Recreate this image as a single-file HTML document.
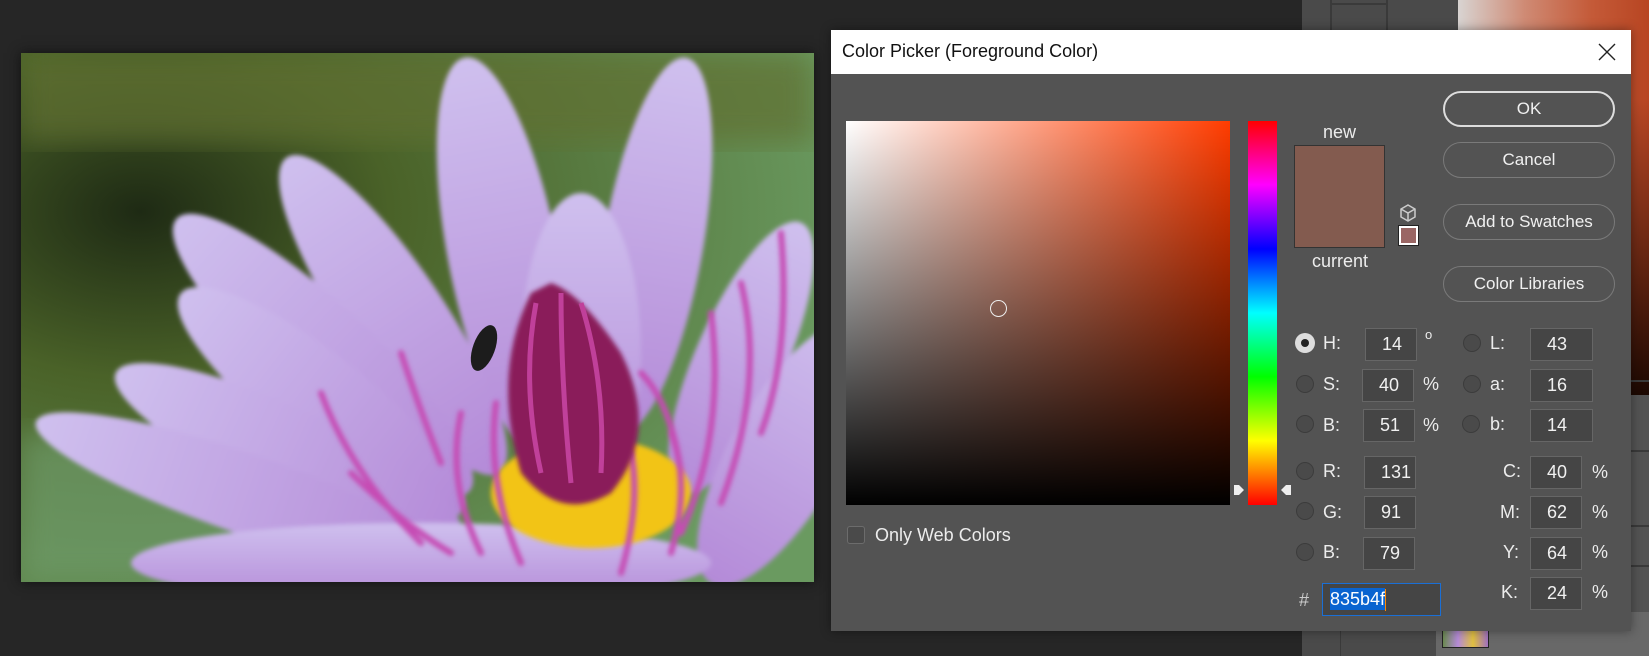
<!DOCTYPE html>
<html><head><style>
*{margin:0;padding:0;box-sizing:border-box}
body{width:1649px;height:656px;overflow:hidden;background:#262626;position:relative;font-family:"Liberation Sans",sans-serif;color:#e8e8e8}
.a{position:absolute}
.inp{position:absolute;background:#454545;border:1px solid #666;height:33px;font-size:18px;line-height:31px;padding-left:16px;color:#f0f0f0}
.lb{position:absolute;font-size:18px;line-height:20px;color:#ececec}
.rd{position:absolute;width:18px;height:18px;border-radius:50%;border:1px solid #3c3c3c;background:#4a4a4a}
.btn{position:absolute;left:1443px;width:172px;height:36px;border:1px solid #7a7a7a;border-radius:18px;text-align:center;font-size:17px;line-height:34px;color:#f0f0f0}
</style></head><body>
<!-- right background panels -->
<div class="a" style="left:1302px;top:0;width:156px;height:656px;background:#4a4a4a"></div>
<div class="a" style="left:1330px;top:0;width:58px;height:5px;border:2px solid #3a3a3a;border-top:0"></div>
<div class="a" style="left:1330px;top:5px;width:58px;height:30px;border:2px solid #3a3a3a;border-top:0;border-bottom:0"></div>
<div class="a" style="left:1458px;top:0;width:191px;height:395px;background:linear-gradient(180deg,rgba(0,0,0,0) 0%,rgba(0,0,0,0) 25%,rgba(20,5,0,.95) 100%),linear-gradient(90deg,#d8d4d2 0%,#cf8a74 35%,#c45a38 70%,#b84522 100%)"></div>
<div class="a" style="left:1458px;top:395px;width:191px;height:261px;background:#535353"></div>
<div class="a" style="left:1410px;top:380px;width:239px;height:2px;background:#3a3a3a"></div>
<div class="a" style="left:1410px;top:450px;width:239px;height:2px;background:#3a3a3a"></div>
<div class="a" style="left:1410px;top:525px;width:239px;height:2px;background:#3a3a3a"></div>
<div class="a" style="left:1410px;top:565px;width:239px;height:2px;background:#3a3a3a"></div>
<div class="a" style="left:1436px;top:612px;width:213px;height:44px;background:#686868"></div>
<div class="a" style="left:1442px;top:628px;width:47px;height:20px;background:linear-gradient(90deg,#6a8a50,#b58ad8,#e0c040,#a070c0);border:1px solid #222"></div>
<div class="a" style="left:1340px;top:405px;width:1px;height:251px;background:#3a3a3a"></div>

<!-- photo -->
<svg class="a" style="left:21px;top:53px;box-shadow:0 0 12px #111" width="793" height="529" viewBox="0 0 793 529">
<defs>
<filter id="b"><feGaussianBlur stdDeviation="14"/></filter>
<filter id="b2"><feGaussianBlur stdDeviation="2.5"/></filter>
<radialGradient id="bg" cx="0.15" cy="0.3" r="0.9"><stop offset="0" stop-color="#1e2a14"/><stop offset="0.35" stop-color="#4a6228"/><stop offset="1" stop-color="#6a9a60"/></radialGradient>
<linearGradient id="pt" x1="0" y1="0" x2="0" y2="1"><stop offset="0" stop-color="#cfc0ee"/><stop offset="1" stop-color="#b48ad8"/></linearGradient>
</defs>
<rect width="793" height="529" fill="url(#bg)"/>
<rect x="0" y="0" width="793" height="90" fill="#607030" opacity=".7" filter="url(#b)"/>
<rect x="0" y="380" width="300" height="149" fill="#72a070" opacity=".6" filter="url(#b)"/>
<g filter="url(#b2)" fill="url(#pt)">
<ellipse cx="482" cy="202" rx="55" ry="201" transform="rotate(-11 482 202)"/>
<ellipse cx="632" cy="192" rx="50" ry="190" transform="rotate(10 632 192)"/>
<ellipse cx="372" cy="262" rx="50" ry="190" transform="rotate(-34 372 262)"/>
<ellipse cx="302" cy="302" rx="50" ry="200" transform="rotate(-47 302 302)"/>
<ellipse cx="300" cy="350" rx="48" ry="178" transform="rotate(-52 300 350)"/>
<ellipse cx="267" cy="400" rx="45" ry="190" transform="rotate(-65 267 400)"/>
<ellipse cx="222" cy="440" rx="40" ry="219" transform="rotate(-71 222 440)"/>
<ellipse cx="720" cy="305" rx="45" ry="148" transform="rotate(24 720 305)"/>
<ellipse cx="765" cy="400" rx="55" ry="150" transform="rotate(30 765 400)"/>
<ellipse cx="560" cy="300" rx="60" ry="160"/>
<ellipse cx="400" cy="510" rx="290" ry="40"/>
</g>
<ellipse cx="570" cy="440" rx="100" ry="55" fill="#f2c418" filter="url(#b2)"/>
<g stroke="#c64cb4" stroke-width="6" fill="none" stroke-linecap="round" filter="url(#b2)">
<path d="M440 360 Q425 430 460 500"/><path d="M475 350 Q465 430 500 510"/><path d="M330 420 Q380 470 430 500"/>
<path d="M300 340 Q330 420 400 490"/><path d="M690 260 Q705 380 660 480"/><path d="M720 230 Q745 330 700 450"/>
<path d="M650 380 Q670 430 650 500"/><path d="M610 400 Q620 450 600 520"/><path d="M760 180 Q770 300 740 380"/>
<path d="M380 300 Q400 360 420 410"/><path d="M620 320 Q650 350 660 420"/>
</g>
<path d="M510 240 Q470 320 500 420 Q540 470 590 440 Q640 380 600 300 Q560 240 530 230 Z" fill="#8a1a5a" filter="url(#b2)"/>
<g stroke="#c0409a" stroke-width="5" fill="none"><path d="M515 250 Q500 330 520 420"/><path d="M540 240 Q540 330 550 430"/><path d="M560 250 Q585 330 580 420"/></g>
<ellipse cx="463" cy="295" rx="11" ry="24" fill="#1c1c1c" transform="rotate(20 463 295)"/>
</svg>

<!-- dialog -->
<div class="a" style="left:831px;top:30px;width:800px;height:601px;background:#535353;box-shadow:0 0 10px rgba(0,0,0,.4)"></div>
<div class="a" style="left:831px;top:30px;width:800px;height:44px;background:#fff"></div>
<div class="a" style="left:842px;top:41px;font-size:18px;color:#111">Color Picker (Foreground Color)</div>
<svg class="a" style="left:1598px;top:43px" width="18" height="18"><path d="M1 1L17 17M17 1L1 17" stroke="#222" stroke-width="1.4"/></svg>

<div class="a" style="left:846px;top:121px;width:384px;height:384px;background:linear-gradient(180deg,rgba(0,0,0,0),#000),linear-gradient(90deg,#fff,#ff3c00)"></div>
<div class="a" style="left:990px;top:300px;width:17px;height:17px;border-radius:50%;border:1.5px solid #eee"></div>
<div class="a" style="left:1248px;top:121px;width:29px;height:384px;background:linear-gradient(180deg,#ff0000 0%,#ff00ff 16.6%,#0000ff 33.3%,#00ffff 50%,#00ff00 66.6%,#ffff00 83.3%,#ff3c00 96.1%,#ff0000 100%)"></div>
<svg class="a" style="left:1233px;top:483px" width="60" height="14"><path d="M1 2L1 12L6 12L11 7L6 2Z" fill="#eee"/><path d="M58 2L58 12L53 12L48 7L53 2Z" fill="#eee"/></svg>

<div class="a" style="left:847px;top:526px;width:18px;height:18px;border:1px solid #6c6c6c;border-radius:3px;background:#4a4a4a"></div>
<div class="lb" style="left:875px;top:525px">Only Web Colors</div>

<div class="lb" style="left:1323px;top:122px">new</div>
<div class="a" style="left:1294px;top:145px;width:91px;height:103px;background:#835b4f;border:1px solid #333"></div>
<div class="lb" style="left:1312px;top:251px">current</div>
<svg class="a" style="left:1398px;top:203px" width="20" height="20"><path d="M10 2L17 6L17 14L10 18L3 14L3 6Z M3 6L10 10L17 6 M10 10L10 18" fill="#5a5a5a" stroke="#ccc" stroke-width="1.5"/></svg>
<div class="a" style="left:1398px;top:225px;width:21px;height:21px;background:#fff;border:1px solid #222;padding:2px"><div style="width:15px;height:15px;background:#9a6664;margin:0"></div></div>

<div class="btn" style="top:91px;border:2px solid #ddd;line-height:32px">OK</div>
<div class="btn" style="top:142px">Cancel</div>
<div class="btn" style="top:204px">Add to Swatches</div>
<div class="btn" style="top:266px">Color Libraries</div>

<div class="a" style="left:1295px;top:333px;width:20px;height:20px;border-radius:50%;background:#ddd"><div style="width:8px;height:8px;border-radius:50%;background:#222;margin:6px"></div></div>
<div class="lb" style="left:1323px;top:333px">H:</div><div class="inp" style="left:1365px;top:328px;width:52px">14</div><div class="lb" style="left:1425px;top:325px;font-size:13px">o</div>
<div class="rd" style="left:1296px;top:375px"></div><div class="lb" style="left:1323px;top:374px">S:</div><div class="inp" style="left:1362px;top:369px;width:52px">40</div><div class="lb" style="left:1423px;top:374px">%</div>
<div class="rd" style="left:1296px;top:415px"></div><div class="lb" style="left:1323px;top:415px">B:</div><div class="inp" style="left:1363px;top:409px;width:52px">51</div><div class="lb" style="left:1423px;top:415px">%</div>
<div class="rd" style="left:1296px;top:462px"></div><div class="lb" style="left:1323px;top:461px">R:</div><div class="inp" style="left:1364px;top:456px;width:52px">131</div>
<div class="rd" style="left:1296px;top:502px"></div><div class="lb" style="left:1323px;top:502px">G:</div><div class="inp" style="left:1364px;top:496px;width:52px">91</div>
<div class="rd" style="left:1296px;top:543px"></div><div class="lb" style="left:1323px;top:542px">B:</div><div class="inp" style="left:1363px;top:537px;width:52px">79</div>
<div class="lb" style="left:1299px;top:590px;color:#ccc">#</div>
<div class="inp" style="left:1322px;top:583px;width:119px;border:1px solid #1a6fd6;padding-left:7px"><span style="background:#0a64d0;color:#fff;line-height:22px;display:inline-block">835b4f</span><span style="display:inline-block;width:1px;height:22px;background:#f80;vertical-align:middle"></span></div>

<div class="rd" style="left:1463px;top:334px"></div><div class="lb" style="left:1490px;top:333px">L:</div><div class="inp" style="left:1530px;top:328px;width:63px">43</div>
<div class="rd" style="left:1463px;top:375px"></div><div class="lb" style="left:1490px;top:374px">a:</div><div class="inp" style="left:1530px;top:369px;width:63px">16</div>
<div class="rd" style="left:1462px;top:415px"></div><div class="lb" style="left:1490px;top:414px">b:</div><div class="inp" style="left:1530px;top:409px;width:63px">14</div>
<div class="lb" style="left:1503px;top:461px">C:</div><div class="inp" style="left:1530px;top:456px;width:52px">40</div><div class="lb" style="left:1592px;top:462px">%</div>
<div class="lb" style="left:1500px;top:502px">M:</div><div class="inp" style="left:1530px;top:496px;width:52px">62</div><div class="lb" style="left:1592px;top:502px">%</div>
<div class="lb" style="left:1503px;top:542px">Y:</div><div class="inp" style="left:1530px;top:537px;width:52px">64</div><div class="lb" style="left:1592px;top:542px">%</div>
<div class="lb" style="left:1501px;top:582px">K:</div><div class="inp" style="left:1530px;top:577px;width:52px">24</div><div class="lb" style="left:1592px;top:582px">%</div>
</body></html>
